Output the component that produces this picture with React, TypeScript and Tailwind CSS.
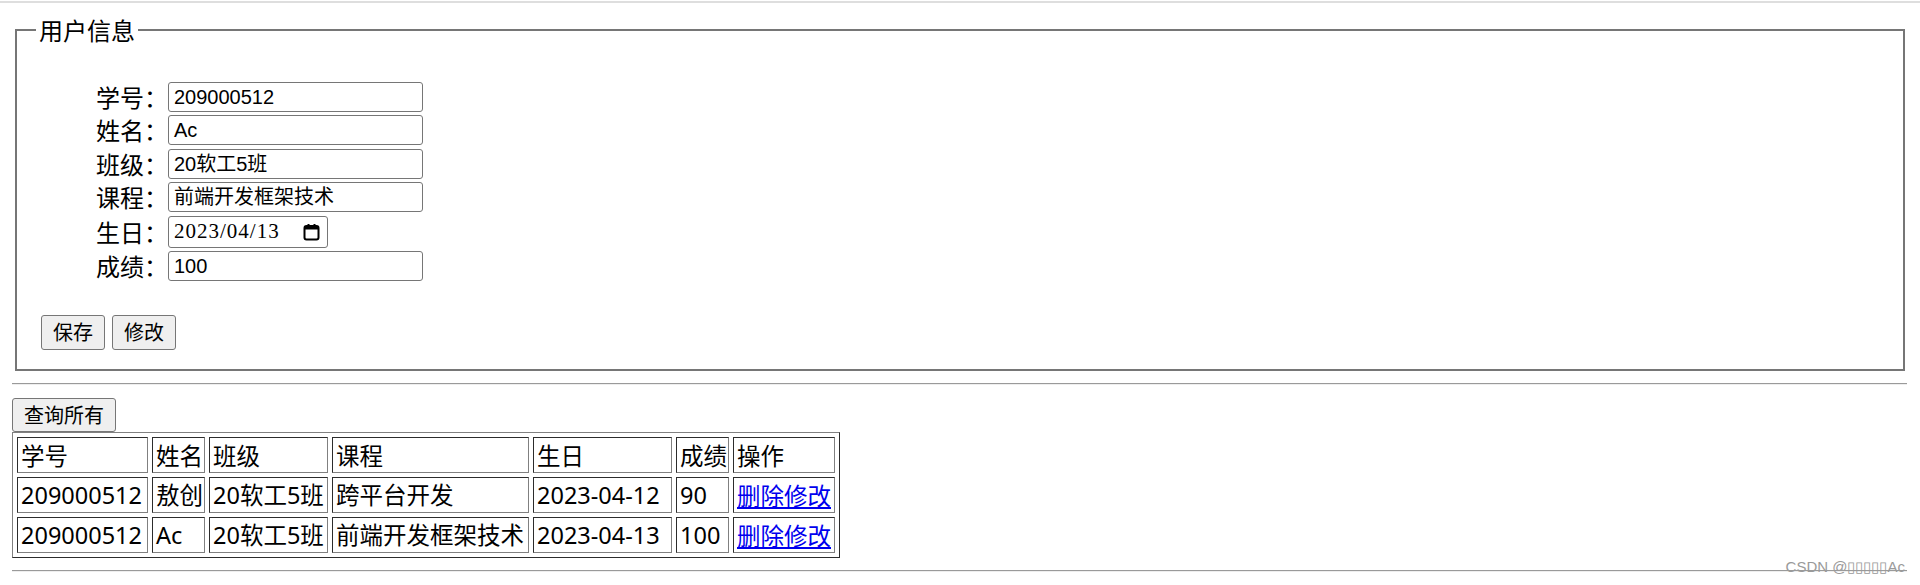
const cjk = "font-['Noto_Sans_CJK_SC',sans-serif]";

type Row = {
  id: string;
  name: string;
  cls: string;
  course: string;
  birth: string;
  score: string;
};

const rows: Row[] = [
  { id: "209000512", name: "敖创", cls: "20软工5班", course: "跨平台开发", birth: "2023-04-12", score: "90" },
  { id: "209000512", name: "Ac", cls: "20软工5班", course: "前端开发框架技术", birth: "2023-04-13", score: "100" },
];

const widths = ["w-[131px]", "w-[53px]", "w-[119px]", "w-[197px]", "w-[139px]", "w-[53px]", "w-[102px]"];
const headers = ["学号", "姓名", "班级", "课程", "生日", "成绩", "操作"];

const cell =
  "h-[36px] px-[3px] py-0 border border-[#808080] [border-style:inset] whitespace-nowrap overflow-hidden leading-[34px]";

function Field({ label, value }: { label: string; value: string }) {
  return (
    <div className="flex items-center h-[30px]">
      <span className="w-[72px] text-[24px] leading-[30px] whitespace-nowrap">{label}：</span>
      <div className="w-[255px] h-[30px] border border-[#767676] rounded-[3px] px-[5px] flex items-center text-[20px] font-['Liberation_Sans','Noto_Sans_CJK_SC',sans-serif]">
        {value}
      </div>
    </div>
  );
}

function CalendarIcon() {
  return (
    <svg width="17" height="18" viewBox="0 0 17 18" fill="none">
      <rect x="1.5" y="3" width="14" height="13.5" rx="2" stroke="#000" strokeWidth="2" />
      <rect x="1.5" y="3" width="14" height="3.5" fill="#000" />
      <rect x="4.5" y="1" width="2" height="3" fill="#000" />
      <rect x="10.5" y="1" width="2" height="3" fill="#000" />
    </svg>
  );
}

function Btn({ children, className = "" }: { children: React.ReactNode; className?: string }) {
  return (
    <button className={`bg-[#efefef] border border-[#767676] rounded-[3px] text-[20px] leading-none flex items-center justify-center ${className}`}>
      {children}
    </button>
  );
}

export default function App() {
  return (
    <div className={`relative w-[1920px] h-[585px] bg-white text-black overflow-hidden ${cjk}`}>
      <div className="mt-[1px] h-[2px] bg-[#dedede]" />

      <fieldset className="mx-[15px] mt-[11px] border-2 border-[#767676] px-[19px] pb-[19px]">
        <legend className="px-[3px] text-[24px] leading-[32px]">用户信息</legend>
        <div className="mt-[36px] ml-[60px] flex flex-col gap-[3.4px]">
          <Field label="学号" value="209000512" />
          <Field label="姓名" value="Ac" />
          <Field label="班级" value="20软工5班" />
          <Field label="课程" value="前端开发框架技术" />
          <div className="flex items-center h-[32px]">
            <span className="w-[72px] text-[24px] leading-[30px] whitespace-nowrap">生日：</span>
            <div className="w-[160px] h-[32px] border border-[#767676] rounded-[3px] pl-[5px] pr-[7px] flex items-center justify-between">
              <span className="text-[21px] leading-none font-['Liberation_Serif',serif] tracking-[1px]">2023/04/13</span>
              <CalendarIcon />
            </div>
          </div>
          <Field label="成绩" value="100" />
        </div>
        <div className="mt-[34px] ml-[5px] flex gap-[7px]">
          <Btn className="w-[64px] h-[35px]">保存</Btn>
          <Btn className="w-[64px] h-[35px]">修改</Btn>
        </div>
      </fieldset>

      <div className="mt-[12px] ml-[12px] mr-[13px] border-t border-t-[#9a9a9a] border-b border-b-[#eeeeee]" />

      <div className="ml-[12px] mt-[13px]">
        <Btn className="w-[104px] h-[34px]">查询所有</Btn>
        <table className="table-fixed w-[828px] border-separate [border-spacing:4px] border border-[#808080] [border-style:outset] text-[23.5px] font-['Noto_Sans','Noto_Sans_CJK_SC',sans-serif]">
          <colgroup>
            {widths.map((w, i) => (
              <col key={i} className={w} />
            ))}
          </colgroup>
          <tbody>
            <tr>
              {headers.map((h) => (
                <td key={h} className={`${cell} font-['Noto_Sans_CJK_SC',sans-serif]`}>
                  {h}
                </td>
              ))}
            </tr>
            {rows.map((r, ri) => (
              <tr key={ri}>
                {[r.id, r.name, r.cls, r.course, r.birth, r.score].map((v, i) => (
                  <td key={i} className={cell}>
                    {v}
                  </td>
                ))}
                <td className={`${cell} font-['Noto_Sans_CJK_SC',sans-serif]`}>
                  <a href="#" className="text-[#0000ee] underline">删除</a>
                  <a href="#" className="text-[#0000ee] underline">修改</a>
                </td>
              </tr>
            ))}
          </tbody>
        </table>
      </div>

      <div className="mt-[12px] ml-[12px] mr-[13px] border-t border-t-[#9a9a9a] border-b border-b-[#eeeeee]" />

      <div className="absolute right-[15px] top-[557px] text-[15px] text-[#9a9a9a] font-['Liberation_Sans',sans-serif] leading-[20px]">
        CSDN @▯▯▯▯▯Ac
      </div>
    </div>
  );
}
